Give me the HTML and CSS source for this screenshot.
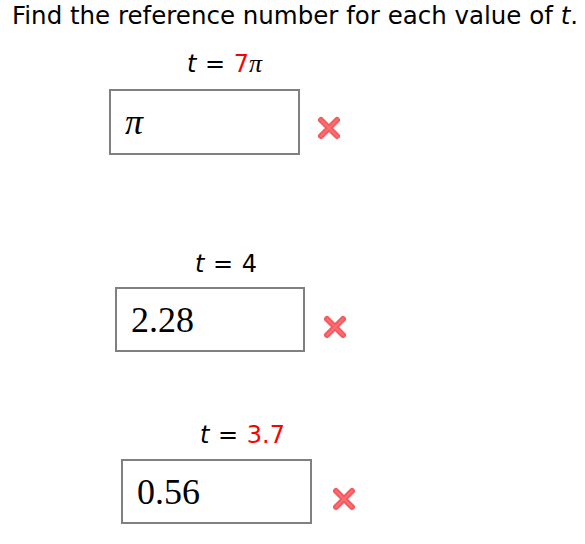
FILE: index.html
```html
<!DOCTYPE html>
<html>
<head>
<meta charset="utf-8">
<link rel="stylesheet" href="styles.css">
</head>
<body>
<p class="title">Find the reference number for each value of <i>t</i>.</p>

<div class="item item1">
  <div class="label"><i>t</i> = <span class="red">7</span><span class="pi">π</span></div>
  <div class="row">
    <div class="box"><span class="val pival">π</span></div>
    <svg class="xmark" viewBox="0 0 26 26" width="26" height="26"><path d="M5 5 L21 21 M21 5 L5 21" stroke="#f45a5f" stroke-width="6" stroke-linecap="round"/><path d="M5 5 L21 21 M21 5 L5 21" stroke="#ff7b7e" stroke-width="2" stroke-linecap="round" opacity="0.6"/></svg>
  </div>
</div>

<div class="item item2">
  <div class="label"><i>t</i> = 4</div>
  <div class="row">
    <div class="box"><span class="val">2.28</span></div>
    <svg class="xmark" viewBox="0 0 26 26" width="26" height="26"><path d="M5 5 L21 21 M21 5 L5 21" stroke="#f45a5f" stroke-width="6" stroke-linecap="round"/><path d="M5 5 L21 21 M21 5 L5 21" stroke="#ff7b7e" stroke-width="2" stroke-linecap="round" opacity="0.6"/></svg>
  </div>
</div>

<div class="item item3">
  <div class="label"><i>t</i> = <span class="red">3.7</span></div>
  <div class="row">
    <div class="box"><span class="val">0.56</span></div>
    <svg class="xmark" viewBox="0 0 26 26" width="26" height="26"><path d="M5 5 L21 21 M21 5 L5 21" stroke="#f45a5f" stroke-width="6" stroke-linecap="round"/><path d="M5 5 L21 21 M21 5 L5 21" stroke="#ff7b7e" stroke-width="2" stroke-linecap="round" opacity="0.6"/></svg>
  </div>
</div>
</body>
</html>
```
FILE: styles.css
```css
html, body {
  margin: 0;
  padding: 0;
  background: #fff;
}
body {
  font-family: "DejaVu Sans", Verdana, sans-serif;
  color: #000;
  width: 585px;
  height: 544px;
  overflow: hidden;
}
.title {
  margin: 0;
  padding: 2px 0 0 12px;
  font-size: 24.5px;
  line-height: 28px;
  height: 28px;
  white-space: nowrap;
}
.item {
  display: flex;
  flex-direction: column;
}
.label {
  font-size: 24px;
  line-height: 24px;
  height: 24px;
  white-space: nowrap;
  word-spacing: 1px;
}
.red { color: #ff0000; }
.pi {
  font-family: "Liberation Serif", serif;
  font-style: italic;
  font-size: 26px;
}
.row {
  display: flex;
  align-items: center;
}
.box {
  height: 61px;
  border: 2px solid #808080;
  display: flex;
  align-items: center;
  padding-left: 14px;
  box-sizing: content-box;
}
.val {
  font-family: "Liberation Serif", "DejaVu Serif", serif;
  font-size: 36px;
  line-height: 40px;
}
.pival {
  font-style: italic;
}
.item1 { margin-top: 22px; }
.item1 .label { padding-left: 187px; margin-bottom: 13px; }
.item1 .row { padding-left: 109px; }
.item1 .box { width: 173px; height: 62px; }
.item1 .xmark { margin-left: 16px; margin-top: 11px; }
.item2 { margin-top: 97px; }
.item2 .label { padding-left: 195px; margin-bottom: 11px; }
.item2 .row { padding-left: 115px; }
.item2 .box { width: 172px; }
.item2 .xmark { margin-left: 17px; margin-top: 14px; }
.item3 { margin-top: 71px; }
.item3 .label { padding-left: 200px; margin-bottom: 12px; }
.item3 .row { padding-left: 121px; }
.item3 .box { width: 173px; }
.item3 .xmark { margin-left: 19px; margin-top: 15px; }
```
